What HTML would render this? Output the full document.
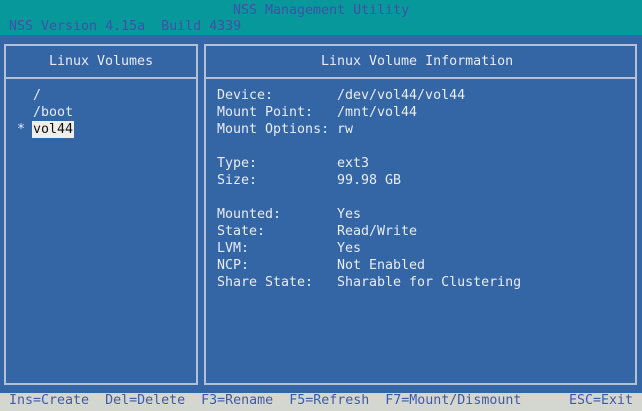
<!DOCTYPE html><html><head><style>
*{margin:0;padding:0}
body{width:642px;height:411px;overflow:hidden;background:#3465a4;position:relative;font-family:"DejaVu Sans Mono","Liberation Mono",monospace;font-size:13.3px;color:#e8ecf4}
.t{position:absolute;white-space:pre;line-height:17px}
.top{position:absolute;left:0;top:0;width:642px;height:35px;background:#06989a}
.bot{position:absolute;left:0;top:393px;width:642px;height:18px;background:#d3d7cf}
.box{position:absolute;border:2px solid #b4c0d6;box-sizing:border-box}
.hl{position:absolute;height:2px;background:#b4c0d6}
</style></head><body>
<div class="top"></div>
<div class="t" style="left:233px;top:2px;color:#3f51a8">NSS Management Utility</div>
<div class="t" style="left:9px;top:18px;color:#3f51a8">NSS Version 4.15a  Build 4339</div>
<div class="box" style="left:4px;top:44px;width:194px;height:341px"></div>
<div class="hl" style="left:4px;top:77px;width:194px"></div>
<div class="box" style="left:204px;top:44px;width:433px;height:341px"></div>
<div class="hl" style="left:204px;top:77px;width:433px"></div>
<div class="t" style="left:49px;top:53px">Linux Volumes</div>
<div class="t" style="left:321px;top:53px">Linux Volume Information</div>
<div class="t" style="left:33px;top:87px">/</div>
<div class="t" style="left:33px;top:104px">/boot</div>
<div class="t" style="left:17px;top:121px">*</div>
<div class="t" style="left:32px;top:121px;background:#eeeeec;color:#111;padding:0 1px">vol44</div>
<div class="t" style="left:217px;top:87px">Device:
Mount Point:
Mount Options:

Type:
Size:

Mounted:
State:
LVM:
NCP:
Share State:</div>
<div class="t" style="left:337px;top:87px">/dev/vol44/vol44
/mnt/vol44
rw

ext3
99.98 GB

Yes
Read/Write
Yes
Not Enabled
Sharable for Clustering</div>
<div class="bot"></div>
<div class="t" style="left:9px;top:392px;color:#3f5aa8">Ins=Create  Del=Delete  F3=Rename  F5=Refresh  F7=Mount/Dismount</div>
<div class="t" style="left:569px;top:392px;color:#3f5aa8">ESC=Exit</div>
</body></html>
